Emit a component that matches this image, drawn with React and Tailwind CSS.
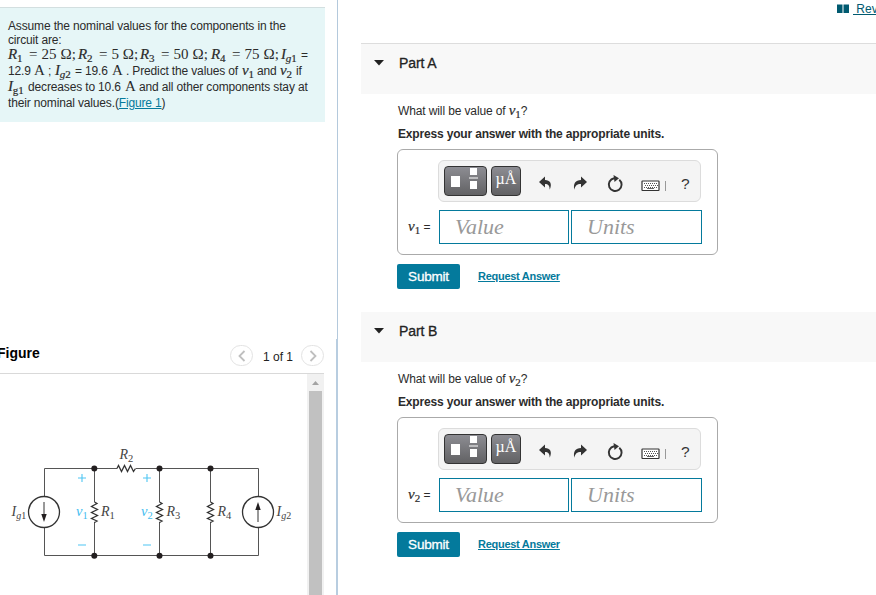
function Sym({ base, sub, italicSub, className = "" }) {
  return (
    <span
      className={`inline-block font-['Liberation_Serif',serif] text-[15px] leading-none [-webkit-text-stroke:0.2px] ${className}`}
    >
      <i>{base}</i>
      <span className="relative top-[2.5px] text-[11px]">
        {italicSub && <i>{italicSub}</i>}
        {sub}
      </span>
    </span>
  );
}

function Roman({ children, className = "" }) {
  return (
    <span className={`inline-block font-['Liberation_Serif',serif] text-[15px] leading-none ${className}`}>
      {children}
    </span>
  );
}

function ProblemText() {
  return (
    <section className="h-[115px] w-[325px] border-t border-[#d3dfe0] bg-[#e6f6f7] pt-[11px] pl-2 text-xs tracking-[-0.15px] whitespace-nowrap text-[#2b2b2b]">
      <p className="h-3.5 leading-[14px]">Assume the nominal values for the components in the</p>
      <p className="h-3.5 leading-[14px]">circuit are:</p>
      <p className="flex h-4 items-baseline leading-4">
        <Sym base="R" sub="1" className="w-[21px]" />
        <Roman className="w-[49px] tracking-[0.1px]">= 25 Ω;</Roman>
        <Sym base="R" sub="2" className="w-[21px]" />
        <Roman className="w-[41px] tracking-[0.1px]">= 5 Ω;</Roman>
        <Sym base="R" sub="3" className="w-[21px]" />
        <Roman className="w-[50px] tracking-[0.1px]">= 50 Ω;</Roman>
        <Sym base="R" sub="4" className="w-[21px]" />
        <Roman className="w-[49px] tracking-[0.1px]">= 75 Ω;</Roman>
        <Sym base="I" italicSub="g" sub="1" className="w-5" />
        <span>=</span>
      </p>
      <p className="flex h-4 items-baseline leading-4">
        <span className="w-[26px]">12.9</span>
        <Roman className="w-[14px]">A</Roman>
        <span className="w-[7px]">;</span>
        <Sym base="I" italicSub="g" sub="2" className="w-5" />
        <span className="w-[37px]">= 19.6</span>
        <Roman className="w-[14px]">A</Roman>
        <span className="w-[116px]">. Predict the values of</span>
        <Sym base="v" sub="1" className="w-[15px]" />
        <span className="w-[23px]">and</span>
        <Sym base="v" sub="2" className="w-4" />
        <span>if</span>
      </p>
      <p className="flex h-4 items-baseline leading-4">
        <Sym base="I" sub="g1" className="w-5" />
        <span className="w-[97px]">decreases to 10.6</span>
        <Roman className="w-[14px]">A</Roman>
        <span>and all other components stay at</span>
      </p>
      <p className="h-4 leading-4">
        their nominal values.(<a className="text-[#047a9c] underline">Figure 1</a>)
      </p>
    </section>
  );
}

function Chevron({ d }) {
  return (
    <span className="flex h-[21px] w-[23px] items-center justify-center rounded-full border border-[#e3e3e3]">
      <svg width="8" height="12" viewBox="0 0 8 12" fill="none" stroke="#bfbfbf" strokeWidth="1.8">
        <path d={d} />
      </svg>
    </span>
  );
}

function VResistor({ x }) {
  return (
    <g fill="none">
      <path d={`M${x} 94V128M${x} 148V181`} stroke="#555" />
      <path
        d={`M${x} 128l2.500 1.500-5.500 3 6 3-6 3 6 3-6 3 5.500 2.500-2.500 1.500`}
        stroke="#333"
        strokeWidth="1.3"
      />
    </g>
  );
}

function Node({ x, y }) {
  return <circle cx={x} cy={y} r="3" fill="#231f20" />;
}

function Circuit() {
  return (
    <svg width="307" height="221" viewBox="0 0 307 221" className="font-['Liberation_Serif',serif]">
      <g stroke="#555" fill="none">
        <path d="M44.500 122V94.500H117M136 94.500H258.500V122" />
        <path d="M44.500 153V181.500H258.500V153" />
      </g>
      <VResistor x={94.5} />
      <VResistor x={159.5} />
      <VResistor x={210.5} />
      <g fill="none" stroke="#333" strokeWidth="1.3">
        <path d="M117 94.500l1.500-3 3 6 3-6 3 6 3-6 3 6 2-3" />
        <circle cx="44" cy="138" r="15.500" />
        <circle cx="258" cy="138" r="15.500" />
        <path d="M44 128V142M258 148V134" strokeWidth="1" />
      </g>
      <path d="M41.300 140h5.400L44 148zM255.300 136h5.400L258 128z" fill="#231f20" />
      <Node x={94.3} y={94.5} />
      <Node x={159.5} y={94.5} />
      <Node x={210.5} y={94.5} />
      <Node x={94.3} y={181.7} />
      <Node x={159.5} y={181.7} />
      <Node x={210.5} y={181.7} />
      <g fill="#444" fontSize="14" fontStyle="italic">
        <text x="119.500" y="85">R<tspan dy="3" fontSize="10.500" fontStyle="normal">2</tspan></text>
        <text x="101" y="142">R<tspan dy="3" fontSize="10.500" fontStyle="normal">1</tspan></text>
        <text x="166.500" y="142">R<tspan dy="3" fontSize="10.500" fontStyle="normal">3</tspan></text>
        <text x="217.500" y="142">R<tspan dy="3" fontSize="10.500" fontStyle="normal">4</tspan></text>
        <text x="11.500" y="142">I<tspan dy="3" fontSize="10">g</tspan><tspan fontSize="10" fontStyle="normal">1</tspan></text>
        <text x="276.500" y="142">I<tspan dy="3" fontSize="10">g</tspan><tspan fontSize="10" fontStyle="normal">2</tspan></text>
      </g>
      <g fill="#3fbdf0" fontSize="14.500" fontStyle="italic">
        <text x="76" y="142">v<tspan dy="3" fontSize="10.500" fontStyle="normal">1</tspan></text>
        <text x="141" y="142">v<tspan dy="3" fontSize="10.500" fontStyle="normal">2</tspan></text>
      </g>
      <path
        d="M78 104h8M82 100v8M143 104h8M147 100v8M78 171h8M143 171h8"
        stroke="#4fc6f3"
        strokeWidth="1.1"
      />
    </svg>
  );
}

function FigurePanel() {
  return (
    <section className="mt-[216px] w-[324px]">
      <header className="flex h-9 items-start border-b border-[#d9d9d9]">
        <h2 className="-ml-[3px] flex-1 pt-[7px] text-sm leading-4 font-bold text-black">Figure</h2>
        <div className="flex items-center pt-[7px] text-xs text-[#222]">
          <Chevron d="M6.500 1L1.500 6l5 5" />
          <span className="w-12 pt-0.5 pl-2.5 whitespace-nowrap">1 of 1</span>
          <Chevron d="M1.500 1l5 5-5 5" />
        </div>
      </header>
      <div className="flex h-[221px]">
        <Circuit />
        <div className="flex w-[17px] flex-col items-center bg-[#f1f1f1]">
          <svg width="17" height="17" className="shrink-0">
            <path d="M5 11h7L8.500 7z" fill="#a3a3a3" />
          </svg>
          <div className="w-[13px] flex-1 bg-[#c1c1c1]" />
        </div>
      </div>
    </section>
  );
}

function Toolbar() {
  return (
    <div className="flex h-[42px] w-[263px] items-center rounded-md border border-[#dcdcdc] bg-[#f4f4f4] pl-[5px]">
      <span className="h-[30px] w-[43px] rounded border border-[#333] bg-linear-to-b from-[#8d8d93] to-[#626264]">
        <svg width="41" height="28">
          <path d="M6 9h9v11H6zM25 1h7v7h-7zM25 14h7v8h-7zM24 10.500h9v1h-9z" fill="#fff" />
        </svg>
      </span>
      <span className="ml-1 flex h-[30px] w-[30px] justify-center rounded border border-[#333] bg-linear-to-b from-[#8d8d93] to-[#626264] font-['Liberation_Serif',serif] text-base leading-6 text-white">
        µÅ
      </span>
      <svg width="178" height="40" fill="#333" className="font-['Liberation_Sans',sans-serif]">
        <path d="M18 21l6-5.500v3.500c5 0 7.500 3.500 4.700 9.700 0-4-1.500-5.700-4.700-5.700v3.500z" />
        <path d="M66 21l-6-5.500v3.500c-5.500 0-8 3.500-6.700 9.700 1-4 2.500-5.700 6.700-5.700v3.500z" />
        <path d="M98.300 18.700a6.400 6.400 0 1 1-5.200-1.400" fill="none" stroke="#333" strokeWidth="1.900" />
        <path d="M92.500 14l5.500 3.300-4.500 3.700z" />
        <rect x="121" y="20" width="17" height="9.500" rx="0.500" fill="#fff" stroke="#333" strokeWidth="1.200" />
        <path d="M123 22.500h13M124 24.500h13M123 26.500h13" stroke="#555" strokeDasharray="1 1" />
        <path d="M126 27.500h7" stroke="#666" />
        <path d="M144.500 20v10" stroke="#999" />
        <text x="160" y="28" fontSize="15.500">?</text>
      </svg>
    </div>
  );
}

function Part({ name, index, headerClass }) {
  return (
    <section className="h-[268px]">
      <header className={`flex items-center bg-[#f8f8f8] pl-[13px] ${headerClass}`}>
        <svg width="10" height="6">
          <path d="M0 0h10L5 5.500z" fill="#222" />
        </svg>
        <h2 className="ml-[15px] text-sm tracking-[-0.1px] text-[#222] [-webkit-text-stroke:0.3px]">{name}</h2>
      </header>
      <div className="pt-[9px] pl-9 text-xs text-[#2b2b2b]">
        <p className="h-4 pl-px leading-4 tracking-[-0.12px]">
          What will be value of <Sym base="v" sub={index} />?
        </p>
        <p className="mt-[7px] h-4 pl-px leading-4 font-bold tracking-[-0.17px]">
          Express your answer with the appropriate units.
        </p>
        <div className="mt-[7px] h-[106px] w-[321px] rounded-md border border-[#aaa] pt-[10px] pl-10">
          <Toolbar />
          <div className="-ml-[30px] mt-2 flex h-[34px] items-center">
            <span className="w-[31px] whitespace-nowrap">
              <Sym base="v" sub={index} /> =
            </span>
            <div className="h-[34px] w-[130px] border border-[#047a9c] bg-white pl-[15px] font-['Liberation_Serif',serif] text-[22px] leading-8 text-[#999] italic">
              Value
            </div>
            <div className="ml-0.5 h-[34px] w-[131px] border border-[#047a9c] bg-white pl-[15px] font-['Liberation_Serif',serif] text-[22px] leading-8 text-[#999] italic">
              Units
            </div>
          </div>
        </div>
        <div className="mt-[9px] flex items-center">
          <button className="h-[25px] w-[63px] rounded-xs bg-[#047a9c] text-[13.5px] leading-[23px] tracking-[-0.2px] text-white [-webkit-text-stroke:0.3px]">
            Submit
          </button>
          <a className="ml-[18px] text-[11px] font-bold tracking-[-0.28px] text-[#047a9c] underline">
            Request Answer
          </a>
        </div>
      </div>
    </section>
  );
}

export default function App() {
  return (
    <div className="flex h-[595px] w-[876px] overflow-hidden bg-white font-['Liberation_Sans',Arial,sans-serif]">
      <aside className="w-[336px] shrink-0 overflow-hidden pt-[7px]">
        <ProblemText />
        <FigurePanel />
      </aside>
      <div className="flex w-[2px] shrink-0 flex-col items-end">
        <div className="h-[339px] w-px bg-[#b4c9dc]" />
        <div className="w-[2px] flex-1 bg-[#b8cde0]" />
      </div>
      <main className="ml-[23px] w-[515px] overflow-hidden">
        <nav className="flex h-[43px] items-start pt-px pl-[476px] text-xs text-[#005a70]">
          <svg width="12" height="9" className="mt-[3px] shrink-0" fill="#005a70">
            <path d="M0 .5h5.500V9H0zM6.500 .5H12V9H6.500z" />
          </svg>
          <a className="ml-1 whitespace-pre underline">{" Review"}</a>
        </nav>
        <Part name="Part A" index="1" headerClass="h-[51px] border-t border-[#ddd] pb-[12px]" />
        <Part name="Part B" index="2" headerClass="mt-px h-[50px] pb-[12px]" />
      </main>
    </div>
  );
}
